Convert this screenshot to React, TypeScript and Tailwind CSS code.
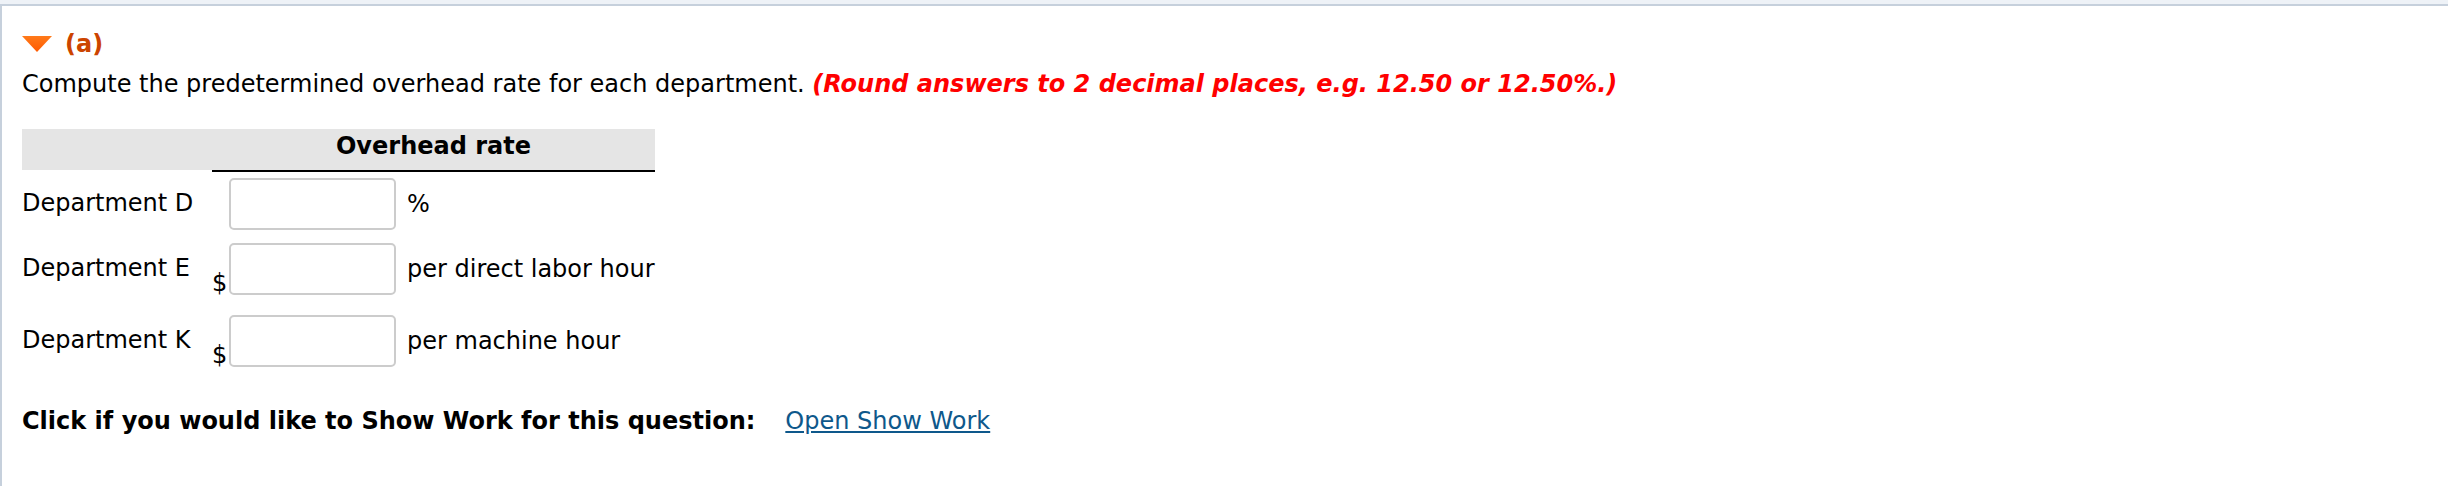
import React from 'react';

const font = { fontFamily: '"DejaVu Sans", Verdana, sans-serif' };

interface RateRow {
  label: string;
  prefix?: string;
  unit: string;
  gap: string;
}

const rows: RateRow[] = [
  { label: 'Department D', unit: '%', gap: 'mt-[6px]' },
  { label: 'Department E', prefix: '$', unit: 'per direct labor hour', gap: 'mt-[13px]' },
  { label: 'Department K', prefix: '$', unit: 'per machine hour', gap: 'mt-[20px]' },
];

const CollapseArrow = () => (
  <svg width="30" height="16" viewBox="0 0 30 16" aria-hidden="true">
    <defs>
      <linearGradient id="arrowFill" x1="0" y1="0" x2="0" y2="1">
        <stop offset="0" stopColor="#ff7a1a" />
        <stop offset="1" stopColor="#ff5a00" />
      </linearGradient>
    </defs>
    <polygon points="0,0 30,0 15,16" fill="url(#arrowFill)" />
  </svg>
);

const App: React.FC = () => {
  return (
    <div className="w-[2448px] h-[486px] bg-[#eef2f7] pt-[4px] text-black" style={font}>
      <div className="h-full bg-white border-t-2 border-l-2 border-[#c6d0dc] pl-[20px]">
        {/* part header */}
        <div className="mt-[24px] flex items-center gap-[13px] leading-[28px]">
          <CollapseArrow />
          <span className="text-[24px] font-bold text-[#cc4400]">(a)</span>
        </div>

        <p className="mt-[12px] text-[24px] leading-[28px]">
          Compute the predetermined overhead rate for each department.{' '}
          <span className="font-bold italic text-[#ff0000]">
            (Round answers to 2 decimal places, e.g. 12.50 or 12.50%.)
          </span>
        </p>

        {/* rate table */}
        <div className="mt-[31px] flex items-start">
          <div className="w-[190px] h-[41px] bg-[#e5e5e5]" />
          <div className="w-[443px] h-[43px] bg-[#e5e5e5] border-b-2 border-black pt-[3px] text-center text-[24px] leading-[28px] font-bold">
            Overhead rate
          </div>
        </div>

        {rows.map((row) => (
          <div key={row.label} className={`${row.gap} flex items-center text-[24px] leading-[28px]`}>
            <div className="w-[190px] -mt-[3px]">{row.label}</div>
            <div className="w-[17px] self-end leading-none">{row.prefix ?? ''}</div>
            <input
              type="text"
              className="w-[167px] h-[52px] border-2 border-[#cccccc] rounded-[5px] bg-white outline-none"
            />
            <div className="ml-[11px]">{row.unit}</div>
          </div>
        ))}

        <div className="mt-[40px] flex items-center text-[24px] leading-[28px]">
          <span className="font-bold">Click if you would like to Show Work for this question:</span>
          <a href="#" className="ml-[30px] text-[#0e588b] underline">
            Open Show Work
          </a>
        </div>
      </div>
    </div>
  );
};

export default App;
